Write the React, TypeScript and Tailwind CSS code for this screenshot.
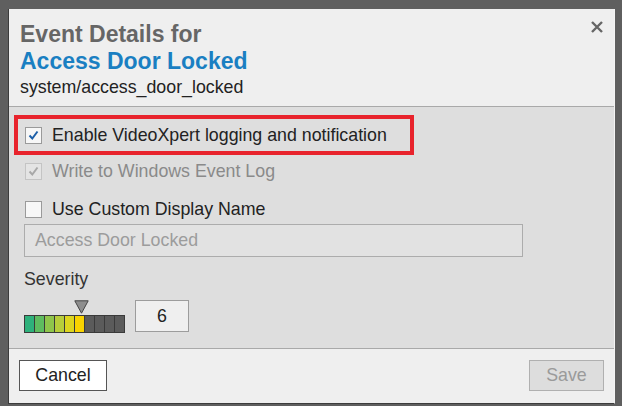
import React from 'react'

const levels = ['#2eb17b', '#5ebc5f', '#8fc54b', '#b7cd3b', '#ddd51f', '#f9d300', '#5b5b5b', '#5b5b5b', '#5b5b5b', '#5b5b5b']

const Check = ({ checked, disabled }: { checked?: boolean; disabled?: boolean }) => {
  return (
    <span
      className={
        disabled
          ? 'flex h-[17px] w-[17px] items-center justify-center border border-[#c4c4c4] bg-[#e4e4e4]'
          : 'flex h-[17px] w-[17px] items-center justify-center border border-[#9a9a9a] bg-[#f7f7f7]'
      }
    >
      {checked && (
        <svg width="11" height="11" viewBox="0 0 11 11">
          <path
            d="M1.5 5.5 L4.3 8.5 L9.5 1.5"
            fill="none"
            stroke={disabled ? '#a8a8a8' : '#1d5fa8'}
            strokeWidth="2"
          />
        </svg>
      )}
    </span>
  )
}

const App = () => {
  return (
    <div
      className="h-[406px] w-[622px] overflow-hidden bg-[#5f5f5f] pl-[8px] pt-[9px]"
      style={{ fontFamily: '"Liberation Sans", Arial, sans-serif' }}
    >
      <div className="flex h-[395px] w-[607px] flex-col border-b border-l border-r border-b-[#3c3c3c] border-l-[#3c3c3c] border-r-[#f4f4f4]">
        {/* header */}
        <header className="relative h-[98px] border-b border-[#a9a9a9] bg-[#efefef] pl-[11px] pt-[11.5px]">
          <div className="text-[23px] font-bold leading-[27px] text-[#666666]">Event Details for</div>
          <div className="text-[23px] font-bold leading-[27px] text-[#1a7fc2]">Access Door Locked</div>
          <div className="text-[17.8px] leading-[24px] text-[#222222]">system/access_door_locked</div>
          <button className="absolute right-[11px] top-[12px] text-[#666666]">
            <svg width="12" height="12" viewBox="0 0 12 12">
              <path d="M1 1 L11 11 M11 1 L1 11" stroke="#666666" strokeWidth="2.4" />
            </svg>
          </button>
        </header>

        {/* body */}
        <section className="flex h-[242px] flex-col border-b border-[#a9a9a9] bg-[#dedede] pl-[15px] text-[17.8px]">
          <div className="-ml-[10px] mt-[8px] flex h-[40px] w-[400px] items-center gap-[10px] border-4 border-[#e8232c] pl-[7px] text-[#222222]">
            <Check checked />
            <span>Enable VideoXpert logging and notification</span>
          </div>
          <div className="mt-[6.5px] flex h-[20px] items-center gap-[10px] pl-[1px] text-[#8a8a8a]">
            <Check checked disabled />
            <span>Write to Windows Event Log</span>
          </div>
          <div className="mt-[18px] flex h-[20px] items-center gap-[10px] pl-[1px] text-[#222222]">
            <Check />
            <span>Use Custom Display Name</span>
          </div>
          <div className="mt-[4.5px] flex h-[33px] w-[499px] items-center border border-[#acacac] bg-[#e2e2e2] pl-[10px] text-[#9c9c9c]">
            Access Door Locked
          </div>
          <div className="mt-[12px] leading-[20px] text-[#333333]">Severity</div>
          <div className="mt-[11px] flex items-start gap-[10px]">
            <div className="flex flex-col">
              <svg className="ml-[50px]" width="15" height="14" viewBox="0 0 15 14">
                <path d="M0.8 0.8 L14.2 0.8 L7.5 13.2 Z" fill="#8d8d8d" stroke="#444444" strokeWidth="1" />
              </svg>
              <div className="mt-[1px] flex h-[18px] border-r border-[#3a3a3a]">
                {levels.map((c, i) => (
                  <span key={i} className="h-[18px] w-[10px] border-y border-l border-[#3a3a3a]" style={{ backgroundColor: c }} />
                ))}
              </div>
            </div>
            <div className="flex h-[32px] w-[54px] items-center justify-center border border-[#9c9c9c] bg-[#efefef] text-[#222222]">
              6
            </div>
          </div>
        </section>

        {/* footer */}
        <footer className="flex flex-1 items-start justify-between bg-[#efefef] px-[10px] pt-[11px] text-[17.8px]">
          <button className="h-[31px] w-[88px] border border-[#555555] bg-white text-[#222222]">Cancel</button>
          <button className="h-[31px] w-[75px] border border-[#b0b0b0] bg-[#dddddd] text-[#9a9a9a]">Save</button>
        </footer>
      </div>
    </div>
  )
}

export default App
